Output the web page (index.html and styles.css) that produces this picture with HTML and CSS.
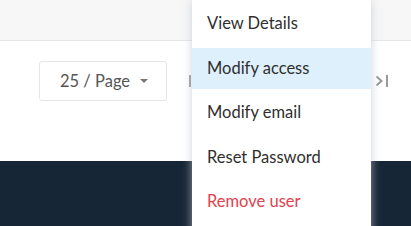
FILE: index.html
```html
<!DOCTYPE html>
<html lang="en">
<head>
    <meta charset="UTF-8">
    <meta name="viewport" content="width=device-width, initial-scale=1.0">
    <title>Users</title>
    <link rel="stylesheet" href="styles.css">
</head>
<body>
    <div class="page">
        <div class="table_head"></div>
        <div class="pager">
            <div class="pager_row">
                <div class="page_size">
                    <span>25 / Page</span>
                    <span class="caret"></span>
                </div>
                <div class="pager_nav">
                    <svg class="nav_icon" width="14" height="14" viewBox="0 0 14 14">
                        <path d="M1 1v12" stroke="#999" stroke-width="2" fill="none"/>
                        <path d="M10 2L5 7l5 5" stroke="#999" stroke-width="2" fill="none"/>
                    </svg>
                    <svg class="nav_icon" width="14" height="14" viewBox="0 0 14 14">
                        <path d="M1.5 2.5l5 4.5-5 4.5" stroke="#999" stroke-width="2" fill="none"/>
                        <path d="M12 1v12" stroke="#999" stroke-width="2" fill="none"/>
                    </svg>
                </div>
            </div>
        </div>
        <div class="footer"></div>

        <ul class="menu">
            <li class="menu_item">View Details</li>
            <li class="menu_item active">Modify access</li>
            <li class="menu_item">Modify email</li>
            <li class="menu_item">Reset Password</li>
            <li class="menu_item danger">Remove user</li>
        </ul>
    </div>
</body>
</html>
```

FILE: styles.css
```css
body {
    margin: 0;
    font-family: "Lato", "Noto Sans", sans-serif;
    background-color: #fff;
}
.page {
    position: relative;
    height: 226px;
    overflow: hidden;
}
.table_head {
    height: 40px;
    background-color: #f7f7f7;
    border-bottom: 1px solid #e6e6e6;
}
.pager {
    box-sizing: border-box;
    height: 120px;
    padding: 20px 0 0 39px;
}
.pager_row {
    display: flex;
    align-items: center;
}
.page_size {
    display: flex;
    align-items: center;
    box-sizing: border-box;
    width: 128px;
    height: 40px;
    padding-left: 20px;
    border: 1px solid #e6e6e6;
    border-radius: 3px;
    color: #555;
    font-size: 16.5px;
}
.caret {
    width: 0;
    height: 0;
    margin-left: 10px;
    border-left: 4px solid transparent;
    border-right: 4px solid transparent;
    border-top: 4px solid #777;
}
.pager_nav {
    display: flex;
    justify-content: space-between;
    width: 200px;
    margin-left: 22px;
}
.nav_icon {
    display: block;
}
.footer {
    height: 65px;
    background-color: #172636;
}
.menu {
    position: absolute;
    top: 0;
    left: 192px;
    width: 179px;
    height: 240px;
    margin: 0;
    padding: 3px 0 0;
    list-style: none;
    background-color: #fff;
    box-shadow: 0 0 9px rgba(190, 198, 206, 0.75);
}
.menu_item {
    height: 41px;
    margin-bottom: 3.5px;
    padding-left: 15px;
    line-height: 41px;
    font-size: 16.5px;
    color: #2f2f2f;
}
.menu_item.active {
    background-color: #def0fc;
}
.menu_item.danger {
    color: #e2404e;
}
```
